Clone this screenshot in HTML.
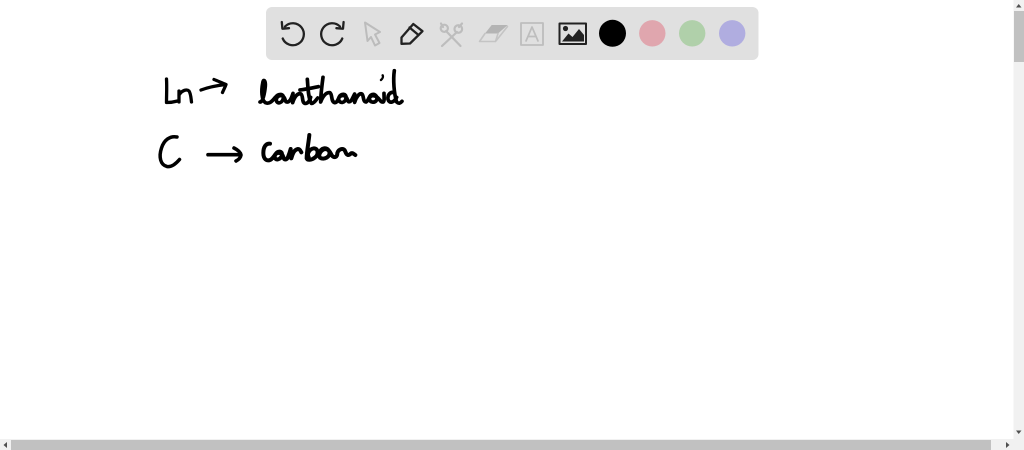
<!DOCTYPE html>
<html lang="en">
<head>
<meta charset="utf-8">
<title>Whiteboard: Ln lanthanoid, C carbon</title>
<style>
html,body{margin:0;padding:0;width:1024px;height:450px;overflow:hidden;background:#fff}
svg{position:absolute;left:0;top:0;display:block}
</style>
</head>
<body>
<svg width="1024" height="450" viewBox="0 0 1024 450" xmlns="http://www.w3.org/2000/svg" fill="none" stroke-linecap="round" stroke-linejoin="round">
<title>Handwritten notes: Ln → lanthanoid; C → carbon</title>
<rect width="1024" height="450" fill="#fff"/>

<!-- toolbar -->
<rect x="266" y="7" width="492.5" height="53" rx="6" fill="#e0e0e0"/>

<!-- undo / redo -->
<g stroke="#222" stroke-width="2.3">
<path d="M285 26.5 A11 11 0 1 1 282.7 38.5"/>
<path d="M281.8 22 L282.4 28.7 L289 28.2"/>
<path d="M340 26.5 A11 11 0 1 0 342.3 38.5"/>
<path d="M343.6 22 L343 28.7 L336.4 28.2"/>
</g>

<!-- pointer -->
<path d="M365 22.5 L380 32 L375 34.5 L379.5 43 L375 45.5 L371 37 L367.5 41 Z" stroke="#bcbcbc" stroke-width="2"/>

<!-- pencil -->
<g stroke="#222" stroke-width="2.3">
<path d="M401.5 37.5 L413.3 24 L422.5 31.2 L410 43.5 L401.5 43.8 Z"/>
<path d="M409.5 27.5 L418.5 35"/>
</g>

<!-- tools -->
<g stroke="#bdbdbd" stroke-width="2.2">
<path d="M446 31 L460.5 46"/><path d="M457 32 L442 46"/>
<circle cx="444.3" cy="28.3" r="3.6"/>
<circle cx="458.3" cy="29" r="3.8"/>
<path d="M441 23.5 L443 27"/><path d="M462 23.5 L459 27"/>
</g>

<!-- eraser -->
<path d="M491.7 25 L507.7 25 L498 33.5 L485 33.5 Z" fill="#b4b4b4"/>
<path d="M485 33.5 L479.5 41.5 L495.5 41.5 L507.5 26.5 M498 33.5 L495.5 41.5" stroke="#c4c4c4" stroke-width="1.6"/>

<!-- text tool -->
<rect x="521" y="23" width="22" height="22" stroke="#bdbdbd" stroke-width="1.8"/>
<path d="M526 41 L532 27 L538 41 M528 36.5 L536 36.5" stroke="#bdbdbd" stroke-width="1.7"/>

<!-- image tool -->
<rect x="559.5" y="23.5" width="26.5" height="20.5" stroke="#222" stroke-width="2"/>
<circle cx="565.5" cy="28.5" r="2.6" fill="#222"/>
<path d="M562 41.5 L568.5 33.5 L572.5 37 L579 29 L584 35 L584 41.5 Z" fill="#222"/>

<!-- colour swatches -->
<circle cx="612.5" cy="33.3" r="13.5" fill="#000"/>
<circle cx="652.3" cy="33.3" r="13.2" fill="#e0a6ae"/>
<circle cx="692.2" cy="33.3" r="13.2" fill="#b0d0aa"/>
<circle cx="732.2" cy="33.3" r="13.2" fill="#b0ade0"/>

<!-- Ln -->
<g stroke="#000" stroke-width="3.3">
<path d="M166.5 79 C167 87 166.5 95 166.5 102.5 C170 102.5 174 102 177.5 101"/>
<path d="M179 91 L179 102 M179 95 C182 90 187 89 189 91 C191 94 191 99 191.5 102"/>
<!-- arrow 1 -->
<path d="M201 90 C209 87 217 85.5 225.5 84.5"/>
<path d="M214 79.5 C218 81 222 83 226 84.5 C225 87.5 223.5 90 222.5 92.5"/>
<!-- C -->
<path d="M177 137 C170 135.5 164 140 161.5 148 C158.5 157 160.5 165 167 166.5 C172 167.5 176.5 163 179.5 159.5" stroke-width="3.5"/>
<!-- arrow 2 -->
<path d="M208 154.7 L240.5 154.7" stroke-width="3.6"/>
<path d="M234 148 C238 150 240.5 152 241 155 C240.5 158 238 160 236 161" stroke-width="3.6"/>
</g>

<!-- lanthanoid -->
<g transform="translate(250 60) scale(.3333)" stroke="#000" stroke-width="11">
<path d="M30 126 C38 128 44 100 46 78 C47 62 40 54 38 70 C34 90 34 120 46 128 C58 134 68 122 76 112 C85 100 102 100 100 114 C98 130 80 134 79 120 C79 106 100 100 105 118 C107 130 116 128 122 118 C126 110 127 106 129 100 C128 110 127 118 128 128 C133 112 142 98 153 102 C160 108 155 126 164 130 C172 132 178 124 182 112"/>
<path d="M172 58 C174 80 174 112 184 130 C190 132 198 120 203 114"/>
<path d="M150 90 C165 88 185 84 205 80"/>
<path d="M219 52 C216 75 212 105 212 126 C218 110 228 96 240 98 C248 104 242 124 254 128 C262 128 264 118 268 110 C274 100 290 100 288 114 C286 130 268 132 266 118 C266 106 286 100 292 118 C294 128 300 128 306 118 C310 110 312 106 314 102 C314 112 312 120 314 127 C318 112 328 98 336 102 C342 108 338 124 348 126 C354 124 356 112 362 106 C372 98 384 108 380 120 C374 130 360 128 358 116 C360 106 372 104 382 112 C390 118 392 128 400 126 C404 122 402 112 402 100"/>
<path d="M398 46 C400 50 398 56 393 60" stroke-width="7"/>
<path d="M433 32 C429 60 432 100 440 126 C446 132 451 130 456 124"/>
<path d="M432 98 C422 94 412 104 414 118 C418 132 432 128 440 112"/>
</g>

<!-- carbon -->
<g transform="translate(250 125) scale(.3333)" stroke="#000" stroke-width="12">
<path d="M60 56 C48 54 40 66 40 84 C40 102 50 110 62 104 C68 100 72 94 76 88 C84 76 98 78 96 90 C92 106 74 108 74 94 C76 82 94 78 100 96 C102 106 110 106 114 96 C118 86 120 80 122 72 C122 82 122 90 124 100 C128 86 132 74 144 72 C150 72 152 78 154 82"/>
<path d="M178 30 C176 52 170 80 170 100 C172 106 184 106 194 98 C206 90 206 70 192 70 C178 72 170 86 176 96"/>
<path d="M208 84 C212 68 232 64 238 80 C242 96 222 106 210 98 C204 90 212 74 226 72 C238 72 242 86 246 92 C254 100 262 96 262 84 C266 72 282 66 286 80 C290 92 296 92 302 86 C306 82 310 86 316 90"/>
</g>

<!-- right scrollbar -->
<rect x="1013.5" y="0" width="10.5" height="439" fill="#f1f1f1"/>
<rect x="1014" y="11" width="10" height="51" fill="#c1c1c1"/>
<path d="M1018.7 4 L1016 7.5 L1021.5 7.5 Z" fill="#505050"/>
<path d="M1016 430.5 L1021.5 430.5 L1018.7 434 Z" fill="#505050"/>

<!-- bottom scrollbar -->
<rect x="0" y="439" width="1024" height="11" fill="#f1f1f1"/>
<rect x="11" y="440" width="980" height="10" fill="#c1c1c1"/>
<path d="M7 442 L3.5 445 L7 448 Z" fill="#505050"/>
<path d="M1006 442 L1009.5 445 L1006 448 Z" fill="#505050"/>
</svg>
</body>
</html>
